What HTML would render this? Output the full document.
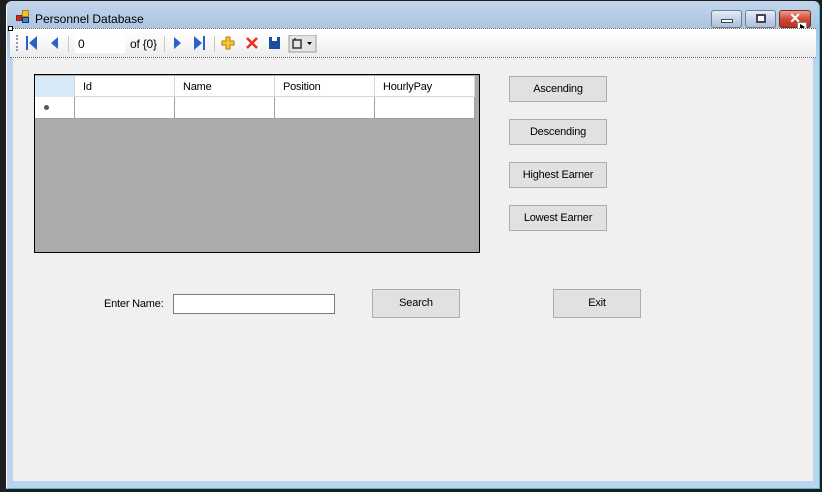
<!DOCTYPE html>
<html><head><style>
*{margin:0;padding:0;box-sizing:border-box}
body{width:822px;height:492px;background:#1e1e1e;position:relative;overflow:hidden;font-family:"Liberation Sans",sans-serif;font-size:11px;letter-spacing:-0.2px;color:#000}
.a{position:absolute}
.frame{left:6px;top:1px;width:814px;height:488px;background:linear-gradient(#c2d5ec,#aac3e0 30px,#bcd3ee 60px,#bcd3ee);border-left:1px solid #fff;border-right:1px solid #3cc4d8;border-bottom:1px solid #3cc4d8;border-radius:6px 6px 0 0}
.client{left:13px;top:58px;width:800px;height:423px;background:#f0f0f0}
.tb{left:10px;top:28px;width:806px;height:30px;background:linear-gradient(#fff,#fafafa 40%,#ececec);border-top:1px dotted #666;border-bottom:1px dotted #666}
.btn{position:absolute;background:#e1e1e1;border:1px solid #adadad;text-align:center}
.wb{position:absolute;top:10px;height:18px;border:1px solid #6f7f95;border-radius:3px;background:linear-gradient(#e6eef8,#c4d3e6 50%,#aebfd6)}
.grid{left:34px;top:74px;width:446px;height:179px;background:#ababab;border:1px solid #000}
.hc{position:absolute;top:1px;height:21px;background:#fff;border-right:1px solid #d8d8d8;border-bottom:1px solid #d8d8d8;padding:5px 0 0 8px}
.rc{position:absolute;top:22px;height:22px;background:#fff;border-right:1px solid #a0a0a0;border-bottom:1px solid #a0a0a0}
</style></head><body>
<div class="a frame"></div>
<div class="a" style="left:16px;top:10px;width:14px;height:14px">
<div class="a" style="left:0;top:5px;width:6px;height:6px;background:#c22;border:1px solid #822"></div>
<div class="a" style="left:6px;top:0;width:7px;height:7px;background:#f3c330;border:1px solid #a80"></div>
<div class="a" style="left:6px;top:7px;width:7px;height:6px;background:#3a7ee0;border:1px solid #235"></div>
</div>
<div class="a" style="left:35px;top:12px;font-size:12px;letter-spacing:0">Personnel Database</div>
<div class="wb" style="left:711px;width:31px"><div class="a" style="left:9px;top:8px;width:12px;height:4px;background:#fff;border:1px solid #445"></div></div>
<div class="wb" style="left:745px;width:31px"><div class="a" style="left:10px;top:3px;width:10px;height:9px;border:2px solid #445;background:#fff"></div></div>
<div class="wb" style="left:779px;width:32px;background:linear-gradient(#e8a090,#cf4b3a 50%,#b83020);border-color:#7a2a20;color:#fff;font-weight:bold;font-size:14px;line-height:15px;text-align:center">✕</div>
<div class="a" style="left:797px;top:22px;width:10px;height:10px;background:#fff;border:1px solid #888"><div class="a" style="left:2px;top:1px;border-left:5px solid #000;border-top:3px solid transparent;border-bottom:3px solid transparent"></div></div>
<div class="a client"></div>
<div class="a tb"></div>
<div class="a" style="left:8px;top:26px;width:5px;height:5px;background:#fff;border:1px solid #000"></div>
<div class="a" style="left:16px;top:35px;width:1px;height:16px;border-left:2px dotted #999"></div>
<svg class="a" style="left:24px;top:35px" width="300" height="18">
<g fill="#2a62c8"><rect x="2" y="1" width="2" height="14"/><path d="M13 1 L5 8 L13 15Z"/><path d="M34 2 L27 8 L34 14Z"/>
<path d="M150 2 L157 8 L150 14Z"/><path d="M170 1 L178 8 L170 15Z"/><rect x="179" y="1" width="2" height="14"/></g>
<rect x="44" y="1" width="1" height="16" fill="#c8c8c8"/><rect x="140" y="1" width="1" height="16" fill="#c8c8c8"/><rect x="190" y="1" width="1" height="16" fill="#c8c8c8"/>
<path d="M202 2h4v4h4v4h-4v4h-4v-4h-4v-4h4z" fill="#f6c630" stroke="#b08000"/>
<path d="M223 3 L233 13 M233 3 L223 13" stroke="#e83020" stroke-width="2.5"/>
<path d="M245 2h11v12h-11z" fill="#1a4fa0"/><rect x="248" y="2" width="5" height="4" fill="#fff"/>
<rect x="265" y="0" width="27" height="17" fill="#e4e4e4" stroke="#999"/>
<path d="M269 5h8v8h-8z M271 3v2" fill="none" stroke="#333" stroke-width="1.5"/>
<path d="M283 7h5l-2.5 3z" fill="#000"/>
</svg>
<div class="a" style="left:75px;top:34px;width:50px;height:19px;background:#fff"></div>
<div class="a" style="left:78px;top:37px;font-size:12px">0</div>
<div class="a" style="left:130px;top:37px;font-size:12px">of {0}</div>
<div class="a grid">
<div class="a" style="left:0;top:1px;width:40px;height:21px;background:#d7e8f7;border-right:1px solid #d8d8d8"></div>
<div class="hc" style="left:40px;width:100px">Id</div>
<div class="hc" style="left:140px;width:100px">Name</div>
<div class="hc" style="left:240px;width:100px">Position</div>
<div class="hc" style="left:340px;width:100px">HourlyPay</div>
<div class="rc" style="left:0;width:40px"><div class="a" style="left:9px;top:8px;width:5px;height:5px;background:#555;border-radius:50%"></div></div>
<div class="rc" style="left:40px;width:100px"></div>
<div class="rc" style="left:140px;width:100px"></div>
<div class="rc" style="left:240px;width:100px"></div>
<div class="rc" style="left:340px;width:100px"></div>
</div>
<div class="btn" style="left:509px;top:76px;width:98px;height:26px;line-height:24px">Ascending</div>
<div class="btn" style="left:509px;top:119px;width:98px;height:26px;line-height:24px">Descending</div>
<div class="btn" style="left:509px;top:162px;width:98px;height:26px;line-height:24px">Highest Earner</div>
<div class="btn" style="left:509px;top:205px;width:98px;height:26px;line-height:24px">Lowest Earner</div>
<div class="a" style="left:104px;top:298px">Enter Name:</div>
<div class="a" style="left:173px;top:294px;width:162px;height:20px;background:#fff;border:1px solid #7a7a7a"></div>
<div class="btn" style="left:372px;top:289px;width:88px;height:29px;line-height:27px">Search</div>
<div class="btn" style="left:553px;top:289px;width:88px;height:29px;line-height:27px">Exit</div>
</body></html>
